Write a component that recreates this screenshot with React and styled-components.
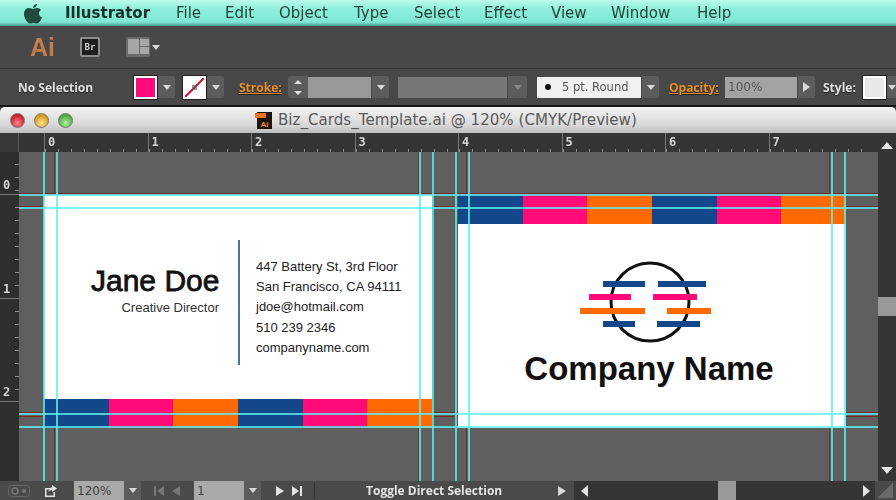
import { createGlobalStyle, styled } from 'styled-components';

const BLUE = '#13478a';
const PINK = '#ff0a78';
const ORANGE = '#ff6a00';

const GlobalStyle = createGlobalStyle`
    html, body {
        margin: 0;
        padding: 0;
        background: #484848;
    }
    * {
        box-sizing: border-box;
    }
`;

const Screen = styled.div`
    width: 896px;
    height: 500px;
    display: flex;
    flex-direction: column;
    overflow: hidden;
    font-family: "DejaVu Sans", sans-serif;
    filter: blur(0.45px);
`;

const MenuBar = styled.div`
    height: 26px;
    flex: none;
    display: flex;
    align-items: center;
    padding-left: 24px;
    background: linear-gradient(#bdfaee 0, #8ef0dc 35%, #7fe6d2 85%, #4d9c8e 100%);
    color: #24423c;
    font-size: 15px;
`;

const MenuItem = styled.span`
    margin-left: ${p => p.$left}px;
    font-weight: ${p => (p.$bold ? 700 : 400)};
    color: ${p => (p.$bold ? '#16302b' : '#24423c')};
    white-space: nowrap;
    display: inline-block;
    width: ${p => p.$w}px;
`;

const AppBar = styled.div`
    height: 43px;
    flex: none;
    display: flex;
    align-items: center;
    padding-left: 30px;
    background: #484848;
    border-bottom: 1px solid #333;
`;

const AiMark = styled.span`
    width: 50px;
    color: #c17c4f;
    font: 700 25px "Liberation Sans", sans-serif;
`;

const BrButton = styled.span`
    width: 20px;
    height: 20px;
    display: flex;
    align-items: center;
    justify-content: center;
    border: 2px solid #8c8c8c;
    border-radius: 2px;
    background: #1e1e1e;
    color: #cfcfcf;
    font: 700 9px "DejaVu Sans Mono", monospace;
`;

const LayoutButton = styled.span`
    width: 24px;
    height: 20px;
    margin-left: 26px;
    display: grid;
    grid-template-columns: 11px 9px;
    grid-template-rows: 7px 7px;
    gap: 1px;
    padding: 2px;
    border-radius: 2px;
    background: #6a6a6a;

    i {
        background: #a6a6a6;
    }
    i:first-child {
        grid-row: span 2;
    }
`;

const Caret = styled.span`
    width: 0;
    height: 0;
    flex: none;
    margin-left: ${p => p.$left || 0}px;
    border-left: 4px solid transparent;
    border-right: 4px solid transparent;
    border-top: 5px solid ${p => p.$color || '#d8d8d8'};
`;

const ControlBar = styled.div`
    height: 38px;
    flex: none;
    display: flex;
    align-items: center;
    padding-left: 18px;
    background: #484848;
    border-bottom: 2px solid #161616;
    font: 700 12px "Open Sans", sans-serif;
    color: #e0e0e0;
`;

const Label = styled.span`
    width: ${p => p.$w}px;
    margin-left: ${p => p.$left || 0}px;
    flex: none;
    white-space: nowrap;
    text-shadow: 0 1px 1px #222;
`;

const LinkLabel = styled(Label)`
    color: #e8902c;
    text-decoration: underline;
`;

const Swatch = styled.span`
    width: 23px;
    height: 23px;
    flex: none;
    margin-left: ${p => p.$left || 0}px;
    border: 2px solid #fff;
    outline: 1px solid #222;
    background: ${p => p.$color};
`;

const NoneSwatch = styled(Swatch)`
    position: relative;
    background: linear-gradient(135deg, #fff 45%, #ed1c3c 45%, #ed1c3c 55%, #fff 55%);

    &::after {
        content: '';
        position: absolute;
        left: 7px;
        top: 7px;
        width: 5px;
        height: 5px;
        background: rgba(90, 90, 90, 0.65);
    }
`;

const DropButton = styled.span`
    width: ${p => p.$w || 17}px;
    height: 22px;
    flex: none;
    margin-left: ${p => p.$left ?? 1}px;
    display: flex;
    align-items: center;
    justify-content: center;
    background: #5c5c5c;
    border-radius: 0 2px 2px 0;
`;

const PlayArrow = styled.span`
    width: 0;
    height: 0;
    border-top: 5px solid transparent;
    border-bottom: 5px solid transparent;
    border-left: 7px solid ${p => p.$color || '#d8d8d8'};
`;

const Stepper = styled.span`
    width: 20px;
    height: 22px;
    flex: none;
    margin-left: ${p => p.$left}px;
    display: flex;
    flex-direction: column;
    align-items: center;
    justify-content: space-around;
    background: #5c5c5c;
    border-radius: 2px 0 0 2px;

    i {
        border-left: 4px solid transparent;
        border-right: 4px solid transparent;
        border-bottom: 4px solid #ddd;
    }
    i:last-child {
        transform: rotate(180deg);
    }
`;

const Field = styled.span`
    width: ${p => p.$w}px;
    height: 21px;
    flex: none;
    margin-left: ${p => p.$left || 0}px;
    display: flex;
    align-items: center;
    padding-left: 3px;
    background: ${p => p.$color || '#999'};
    color: #555;
    font: 400 12px "DejaVu Sans", sans-serif;
`;

const BrushField = styled(Field)`
    padding-left: 8px;
    background: #f0f0f0;
    color: #555;
    gap: 11px;
    font-size: 11.5px;

    i {
        width: 6px;
        height: 6px;
        border-radius: 50%;
        background: #111;
    }
`;

const TitleBar = styled.div`
    height: 26px;
    flex: none;
    position: relative;
    display: flex;
    align-items: center;
    padding-left: 10px;
    gap: 10px;
    border-radius: 5px 5px 0 0;
    background: linear-gradient(#f4f4f4, #d8d8d8 70%, #bdbdbd);
`;

const Light = styled.span`
    width: 15px;
    height: 15px;
    margin-right: -1px;
    border-radius: 50%;
    border: 1px solid #777;
    background: radial-gradient(circle at 50% 70%, ${p => p.$glow} 0, ${p => p.$color} 70%);
`;

const TitleText = styled.div`
    margin-left: 175px;
    display: flex;
    align-items: center;
    gap: 6px;
    color: #5a5a5a;
    font-size: 15.1px;
    white-space: nowrap;
`;

const DocIcon = styled.span`
    position: relative;
    width: 15px;
    height: 17px;
    display: flex;
    align-items: flex-end;
    justify-content: center;
    background: #1d1208;
    color: #f08a1c;
    font: 700 8px "Liberation Sans", sans-serif;

    &::before {
        content: '';
        position: absolute;
        left: -2px;
        top: 1px;
        width: 11px;
        height: 5px;
        background: #f0701c;
    }
`;

const DocArea = styled.div`
    flex: none;
    display: grid;
    grid-template-columns: 19px 859px 18px;
    grid-template-rows: 19px 329px;
`;

const Corner = styled.div`
    background: #383838;
    border-right: 1px solid #555;
`;

const TopRuler = styled.div`
    display: flex;
    padding-left: 25px;
    overflow: hidden;
    background: #353535;
    color: #d4d4d4;
    font: 700 12px "DejaVu Sans Mono", monospace;
`;

const TopCell = styled.div`
    width: 103.5px;
    flex: none;
    padding: 2px 0 0 3px;
    border-left: 1px solid #777;
    background: repeating-linear-gradient(90deg, #8a8a8a 0 1px, transparent 1px 13px) left bottom / 100% 3px no-repeat;
`;

const Scrollbar = styled.div`
    grid-row: span 2;
    display: flex;
    flex-direction: column;
    background: #353535;
`;

const ScrollEnd = styled.div`
    width: 18px;
    height: ${p => p.$h}px;
    flex: none;
    display: flex;
    align-items: center;
    justify-content: center;
    margin-top: ${p => p.$top || 0}px;

    i {
        width: 0;
        height: 0;
        border-left: 6px solid transparent;
        border-right: 6px solid transparent;
        border-bottom: 7px solid #e4e4e4;
        transform: ${p => (p.$down ? 'rotate(180deg)' : 'none')};
    }
`;

const ScrollThumb = styled.div`
    width: 18px;
    height: 19px;
    margin-top: ${p => p.$top}px;
    flex: none;
    background: #999;
`;

const LeftRuler = styled.div`
    display: flex;
    flex-direction: column;
    overflow: hidden;
    background: #2e2e2e;
    color: #d4d4d4;
    font: 700 12px "DejaVu Sans Mono", monospace;
`;

const LeftCell = styled.div`
    height: ${p => p.$h}px;
    flex: none;
    display: flex;
    align-items: flex-end;
    padding: 0 0 2px 3px;
    border-bottom: 1px solid #777;
    background: repeating-linear-gradient(180deg, transparent 0 12px, #8a8a8a 12px 13px) right top / 4px 100% no-repeat;
`;

const Canvas = styled.div`
    position: relative;
    background: #5f5f5f;
    overflow: hidden;
`;

const Artboard = styled.div`
    position: absolute;
    left: ${p => p.$x}px;
    top: 43px;
    width: 388px;
    height: 233px;
    display: flex;
    flex-direction: column;
    background: #fff;
`;

const Strip = styled.div`
    height: 29px;
    flex: none;
    display: grid;
    grid-template-columns: repeat(6, 1fr);
`;

const StripBlock = styled.div`
    background: ${p => p.$color};
`;

const FrontBody = styled.div`
    flex: 1;
    display: flex;
    align-items: flex-start;
    padding-left: 47px;
    color: #111;
`;

const NameBlock = styled.div`
    width: 128px;
    margin-top: 69px;
    text-align: right;
    white-space: nowrap;
    font-family: "Liberation Sans", sans-serif;
`;

const Name = styled.div`
    font-size: 30px;
    line-height: 34px;
    -webkit-text-stroke: 0.8px #111;
`;

const Role = styled.div`
    margin-top: 2px;
    font-size: 13px;
    line-height: 16px;
    color: #333;
`;

const Divider = styled.div`
    width: 2px;
    height: 125px;
    margin: 45px 16px 0 19px;
    background: #4d74a8;
`;

const Contact = styled.div`
    margin-top: 62px;
    font: 13px/20.2px "Liberation Sans", sans-serif;
    color: #222;
    white-space: nowrap;
`;

const BackBody = styled.div`
    flex: 1;
    display: flex;
    flex-direction: column;
    align-items: center;
    padding: 36px 6px 0 0;
`;

const Logo = styled.svg`
    width: 132px;
    height: 84px;
    flex: none;
    margin-right: 6px;
`;

const CompanyName = styled.div`
    margin-top: 6px;
    font: 700 33px/38px "Liberation Sans", sans-serif;
    color: #111;
    white-space: nowrap;
`;

const VGuide = styled.div`
    position: absolute;
    top: 0;
    bottom: 0;
    left: ${p => p.$x}px;
    width: ${p => (p.$red ? 1 : 2)}px;
    background: ${p => (p.$red ? '#7a2a2a' : 'rgba(90, 240, 240, 0.8)')};
`;

const HGuide = styled.div`
    position: absolute;
    left: 0;
    right: 0;
    top: ${p => p.$y}px;
    height: ${p => (p.$red ? 1 : 2)}px;
    background: ${p => (p.$red ? '#7a2a2a' : 'rgba(90, 240, 240, 0.8)')};
`;

const StatusBar = styled.div`
    height: 19px;
    flex: none;
    display: flex;
    align-items: center;
    background: #4a4a4a;
    color: #e4e4e4;
    font: 700 12px "Open Sans", sans-serif;
`;

const StatusField = styled.span`
    width: 50px;
    height: 19px;
    flex: none;
    margin-left: ${p => p.$left}px;
    padding-left: 3px;
    display: flex;
    align-items: center;
    background: #a9a9a9;
    color: #444;
    font: 400 12px "DejaVu Sans", sans-serif;
`;

const StatusDrop = styled.span`
    width: 17px;
    height: 19px;
    flex: none;
    display: flex;
    align-items: center;
    justify-content: center;
    background: #5c5c5c;
`;

const StatusPill = styled.svg`
    width: 22px;
    height: 12px;
    flex: none;
    margin-left: 8px;
`;

const NavIcon = styled.svg`
    width: 12px;
    height: 12px;
    flex: none;
    margin-left: ${p => p.$left}px;
    fill: ${p => p.$color};
`;

const StatusLabel = styled.span`
    width: 195px;
    flex: none;
    padding-left: 51px;
    margin-left: 11px;
    border-left: 1px solid #333;
    white-space: nowrap;
`;

const HScroll = styled.div`
    width: 301px;
    height: 19px;
    flex: none;
    margin-left: 6px;
    display: flex;
    align-items: center;
    padding: 0 5px 0 7px;
    background: #353535;
`;

const ScrollArrow = styled.span`
    width: 0;
    height: 0;
    border-top: 6px solid transparent;
    border-bottom: 6px solid transparent;
    border-${p => (p.$left ? 'right' : 'left')}: 7px solid #e4e4e4;
`;

const HThumb = styled.span`
    width: 18px;
    height: 19px;
    flex: none;
    margin: 0 127px 0 130px;
    background: #999;
`;

const ResizeGrip = styled.span`
    width: 16px;
    height: 15px;
    flex: none;
    margin-left: 2px;
    background: linear-gradient(135deg, transparent 50%, #6a6a6a 50%);
`;

const menu = [
    { name: 'File', left: 23, w: 28 },
    { name: 'Edit', left: 21, w: 33 },
    { name: 'Object', left: 21, w: 54 },
    { name: 'Type', left: 21, w: 39 },
    { name: 'Select', left: 21, w: 49 },
    { name: 'Effect', left: 21, w: 46 },
    { name: 'View', left: 21, w: 39 },
    { name: 'Window', left: 21, w: 65 },
    { name: 'Help', left: 21, w: 36 },
];

const stripColors = [BLUE, PINK, ORANGE, BLUE, PINK, ORANGE];

const contactLines = [
    '447 Battery St, 3rd Floor',
    'San Francisco, CA 94111',
    'jdoe@hotmail.com',
    '510 239 2346',
    'companyname.com',
];

const logoBars = [
    { x: 23, y: 21, w: 42, c: BLUE },
    { x: 78, y: 21, w: 48, c: BLUE },
    { x: 9, y: 34, w: 42, c: PINK },
    { x: 73, y: 34, w: 44, c: PINK },
    { x: 0, y: 48, w: 65, c: ORANGE },
    { x: 87, y: 48, w: 44, c: ORANGE },
    { x: 23, y: 61, w: 32, c: BLUE },
    { x: 77, y: 61, w: 43, c: BLUE },
];

const vGuides = [24, 37, 400, 413, 436, 449, 812, 825];
const hGuides = [42, 55, 261, 274];
const redLines = [41, 54, 260, 264];
const redColumns = [35, 399, 447, 810];

const Strips = () => (
    <Strip>
        {stripColors.map((c, idx) => (
            <StripBlock key={idx} $color={c} />
        ))}
    </Strip>
);

const App = () => {
    return (
        <Screen>
            <GlobalStyle />
            <MenuBar>
                <svg width="18" height="21" viewBox="0 0 18 21">
                    <path fill="#1f4a40" d="M13 1c0 2-2 4-4 4 0-2 2-4 4-4zM9 6c1 0 2-1 4-1 1 0 3 .6 4 2-3 2-2.500 6 1 7.500-1 2.500-3 6-5 6-1 0-2-.8-3.500-.8S7 20.500 6 20.500C3.500 20.500 0 15 0 11c0-4 2.500-6 5-6 1.500 0 3 1 4 1z" />
                </svg>
                <MenuItem $bold $left={23} $w={88}>Illustrator</MenuItem>
                {menu.map(m => (
                    <MenuItem key={m.name} $left={m.left} $w={m.w}>{m.name}</MenuItem>
                ))}
            </MenuBar>

            <AppBar>
                <AiMark>Ai</AiMark>
                <BrButton>Br</BrButton>
                <LayoutButton><i /><i /><i /></LayoutButton>
                <Caret $left={2} />
            </AppBar>

            <ControlBar>
                <Label $w={116}>No Selection</Label>
                <Swatch $color={PINK} />
                <DropButton><Caret /></DropButton>
                <NoneSwatch $left={8} />
                <DropButton><Caret /></DropButton>
                <LinkLabel $w={49} $left={15}>Stroke:</LinkLabel>
                <Stepper $left={0}><i /><i /></Stepper>
                <Field $w={63} />
                <DropButton><Caret /></DropButton>
                <Field $w={109} $left={9} $color="#777" />
                <DropButton $w={19}><Caret $color="#888" /></DropButton>
                <BrushField $w={104} $left={10}><i />5 pt. Round</BrushField>
                <DropButton><Caret /></DropButton>
                <LinkLabel $w={56} $left={10}>Opacity:</LinkLabel>
                <Field $w={72} $color="#a3a3a3">100%</Field>
                <DropButton><PlayArrow /></DropButton>
                <Label $w={40} $left={8}>Style:</Label>
                <Swatch $color="#e8e8e8" />
                <DropButton $w={10}><Caret /></DropButton>
            </ControlBar>

            <TitleBar>
                <Light $color="#c8182a" $glow="#ff8a8a" />
                <Light $color="#d69a1a" $glow="#ffe08a" />
                <Light $color="#4aa83a" $glow="#b4f0a0" />
                <TitleText>
                    <DocIcon>Ai</DocIcon>
                    Biz_Cards_Template.ai @ 120% (CMYK/Preview)
                </TitleText>
            </TitleBar>

            <DocArea>
                <Corner />
                <TopRuler>
                    {[0, 1, 2, 3, 4, 5, 6, 7].map(n => (
                        <TopCell key={n}>{n}</TopCell>
                    ))}
                </TopRuler>
                <Scrollbar>
                    <ScrollEnd $h={24}><i /></ScrollEnd>
                    <ScrollThumb $top={140} />
                    <ScrollEnd $h={22} $top={143} $down><i /></ScrollEnd>
                </Scrollbar>
                <LeftRuler>
                    <LeftCell $h={43}>0</LeftCell>
                    <LeftCell $h={103.5}>1</LeftCell>
                    <LeftCell $h={103.5}>2</LeftCell>
                </LeftRuler>
                <Canvas>
                    {redLines.map(y => <HGuide key={y} $y={y} $red />)}
                    {redColumns.map(x => <VGuide key={x} $x={x} $red />)}

                    <Artboard $x={25}>
                        <FrontBody>
                            <NameBlock>
                                <Name>Jane Doe</Name>
                                <Role>Creative Director</Role>
                            </NameBlock>
                            <Divider />
                            <Contact>
                                {contactLines.map(line => (
                                    <div key={line}>{line}</div>
                                ))}
                            </Contact>
                        </FrontBody>
                        <Strips />
                    </Artboard>

                    <Artboard $x={439}>
                        <Strips />
                        <BackBody>
                            <Logo viewBox="0 0 132 84">
                                <circle cx="70" cy="42" r="39" fill="none" stroke="#111" strokeWidth="3" />
                                {logoBars.map((b, idx) => (
                                    <rect key={idx} x={b.x} y={b.y} width={b.w} height="6" fill={b.c} />
                                ))}
                            </Logo>
                            <CompanyName>Company Name</CompanyName>
                        </BackBody>
                    </Artboard>

                    {vGuides.map(x => <VGuide key={x} $x={x} />)}
                    {hGuides.map(y => <HGuide key={y} $y={y} />)}
                </Canvas>
            </DocArea>

            <StatusBar>
                <StatusPill viewBox="0 0 22 12">
                    <rect x="0.5" y="0.5" width="21" height="11" rx="3" fill="none" stroke="#666" />
                    <circle cx="7" cy="6" r="3" fill="none" stroke="#777" strokeWidth="1.5" />
                    <circle cx="16" cy="6" r="2" fill="#777" />
                </StatusPill>
                <NavIcon $left={15} $color="#e4e4e4" viewBox="0 0 12 12">
                    <path d="M0 3h6v1.500H1.500v6h7V7H10v5H0zM7 0l5 3.500L7 7V5C5 5 4 6 3.500 7.500 3.500 4.500 5 2.500 7 2z" />
                </NavIcon>
                <StatusField $left={17}>120%</StatusField>
                <StatusDrop><Caret /></StatusDrop>
                <NavIcon $left={12} $color="#777" viewBox="0 0 12 12">
                    <path d="M1 1h2v10H1zM11 1v10L4 6z" />
                </NavIcon>
                <NavIcon $left={5} $color="#777" viewBox="0 0 12 12">
                    <path d="M10 1v10L2 6z" />
                </NavIcon>
                <StatusField $left={12}>1</StatusField>
                <StatusDrop><Caret /></StatusDrop>
                <NavIcon $left={13} $color="#e4e4e4" viewBox="0 0 12 12">
                    <path d="M2 1v10l8-5z" />
                </NavIcon>
                <NavIcon $left={5} $color="#e4e4e4" viewBox="0 0 12 12">
                    <path d="M1 1v10l7-5zM9 1h2v10H9z" />
                </NavIcon>
                <StatusLabel>Toggle Direct Selection</StatusLabel>
                <NavIcon $left={47} $color="#d8d8d8" viewBox="0 0 12 12">
                    <path d="M2 1v10l8-5z" />
                </NavIcon>
                <HScroll>
                    <ScrollArrow $left />
                    <HThumb />
                    <ScrollArrow />
                </HScroll>
                <ResizeGrip />
            </StatusBar>
        </Screen>
    );
};

export default App;
